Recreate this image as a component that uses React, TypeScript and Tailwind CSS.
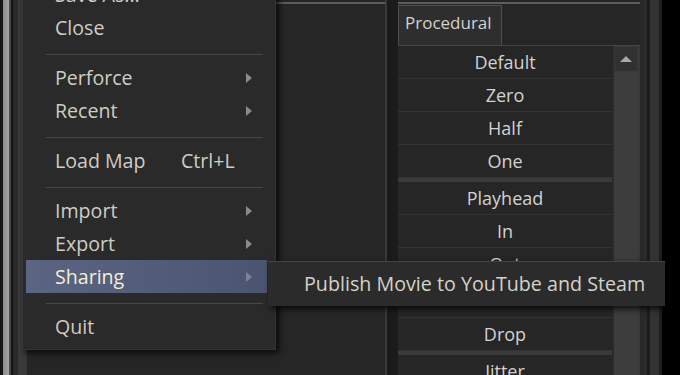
import React from "react";

const Arrow = ({ c = "#8a8a8a" }: { c?: string }) => (
  <svg width="8" height="12" viewBox="0 0 8 12" className="shrink-0">
    <path d="M1 1 L7 6 L1 11 Z" fill={c} />
  </svg>
);

type MI = { label?: string; shortcut?: string; sub?: boolean; sep?: boolean; active?: boolean };

const menu: MI[] = [
  { label: "Save As..." },
  { label: "Close" },
  { sep: true },
  { label: "Perforce", sub: true },
  { label: "Recent", sub: true },
  { sep: true },
  { label: "Load Map", shortcut: "Ctrl+L" },
  { sep: true },
  { label: "Import", sub: true },
  { label: "Export", sub: true },
  { label: "Sharing", sub: true, active: true },
  { sep: true },
  { label: "Quit" },
];

type LI = { label?: string; thick?: boolean };
const list: LI[] = [
  { label: "Default" },
  { label: "Zero" },
  { label: "Half" },
  { label: "One" },
  { thick: true },
  { label: "Playhead" },
  { label: "In" },
  { label: "Out" },
  { thick: true },
  { label: "" },
  { label: "Drop" },
  { thick: true },
  { label: "Jitter" },
];

export default function App() {
  return (
    <div
      className="relative w-[680px] h-[375px] overflow-hidden bg-[#252525] flex"
      style={{ fontFamily: '"Open Sans", "Noto Sans", sans-serif' }}
    >
      {/* left edge strips */}
      <div className="flex h-full shrink-0">
        <div className="w-[3px] bg-[#161616]" />
        <div className="w-[6px] bg-gradient-to-r from-[#8c8c8c] to-[#a4a4a4]" />
        <div className="w-[2px] bg-[#4a4a4a]" />
        <div className="w-[2px] bg-[#141414]" />
        <div className="w-[5px] bg-[#2a2a2a]" />
        <div className="w-[8px] bg-[#3a3a3a]" />
      </div>

      {/* middle column */}
      <div className="flex flex-col w-[359px] shrink-0 h-full">
        <div className="h-[2px] bg-[#252525]" />
        <div className="h-[2px] bg-[#5c5c5c]" />
        <div className="flex-1 bg-[#262626] border-l border-[#333]" />
      </div>

      {/* divider */}
      <div className="flex h-full shrink-0">
        <div className="w-[2px] bg-[#3a3a3a]" />
        <div className="w-[11px] bg-[#1b1b1b]" />
      </div>

      {/* right panel */}
      <div className="flex flex-col w-[242px] shrink-0 h-full">
        <div className="h-[2px] shrink-0 bg-[#252525]" />
        <div className="h-[2px] shrink-0 bg-[#5c5c5c]" />
        <div className="h-[1px] shrink-0" />
        <div className="flex h-[40px] shrink-0 bg-[#262626]">
          <div className="w-[104px] bg-[#2e2e2e] border border-[#4e4e4e] border-b-0 text-[17px] text-[#d4d2cc] pl-[6px] leading-[34px]">
            Procedural
          </div>
          <div className="flex-1" />
        </div>
        <div className="h-[1px] shrink-0 bg-[#444]" />
        <div className="flex flex-1 min-h-0">
          <div className="w-[214px] flex flex-col">
            {list.map((it, i) =>
              it.thick ? (
                <div key={i} className="h-[4px] shrink-0 bg-[#3a3a3a]" />
              ) : (
                <div
                  key={i}
                  className="h-[33px] shrink-0 flex items-center justify-center border-b border-[#333] bg-[#262626] text-[18px] text-[#d2d2d2]"
                >
                  {it.label}
                </div>
              )
            )}
          </div>
          <div className="w-[2px] bg-[#2a2a2a]" />
          <div className="w-[24px] flex flex-col">
            <div className="h-[26px] bg-[#313131] border border-[#3a3a3a] flex items-center justify-center">
              <svg width="14" height="8" viewBox="0 0 14 8">
                <path d="M1 7 L7 1 L13 7 Z" fill="#a8a8a8" />
              </svg>
            </div>
            <div className="flex-1 bg-[#3d3d3d]" />
          </div>
          <div className="w-[2px] bg-[#393939]" />
        </div>
      </div>

      {/* far right strips */}
      <div className="flex h-full shrink-0">
        <div className="w-[7px] bg-[#2a2a2a]" />
        <div className="w-[3px] bg-[#1c1c1c]" />
        <div className="w-[9px] bg-[#333]" />
        <div className="w-[3px] bg-[#1e1e1e]" />
        <div className="w-[18px] bg-black" />
      </div>

      {/* popup menu */}
      <div className="absolute left-[22px] top-[-25px] w-[254px] pt-[2px] pb-[6px] bg-[#2a2a2a] border border-[#343434] shadow-[3px_3px_6px_rgba(0,0,0,0.75)]">
        {menu.map((it, i) =>
          it.sep ? (
            <div key={i} className="h-[17px] pt-[10px] pl-[23px] pr-[12px]">
              <div className="h-[1px] bg-[#484848]" />
            </div>
          ) : (
            <div
              key={i}
              className={
                "h-[33px] ml-[3px] mr-[8px] pl-[29px] pr-[14px] flex items-center text-[19.6px] " +
                (it.active
                  ? "bg-gradient-to-r from-[#5b6583] to-[#4b5470] text-[#f3eed6]"
                  : "text-[#cfcdc6]")
              }
            >
              {it.shortcut ? (
                <>
                  <span className="w-[126px] shrink-0">{it.label}</span>
                  <span className="flex-1">{it.shortcut}</span>
                </>
              ) : (
                <span className="flex-1">{it.label}</span>
              )}
              {it.sub && <Arrow c={it.active ? "#7e8296" : "#8a8a8a"} />}
            </div>
          )
        )}
      </div>

      {/* submenu */}
      <div className="absolute left-[268px] top-[261px] w-[397px] h-[45px] bg-[#2b2b2b] border-t border-[#444] shadow-[3px_3px_6px_rgba(0,0,0,0.75)] flex items-center pl-[36px] text-[19.7px] text-[#d4d2ca]">
        Publish Movie to YouTube and Steam
      </div>
    </div>
  );
}
